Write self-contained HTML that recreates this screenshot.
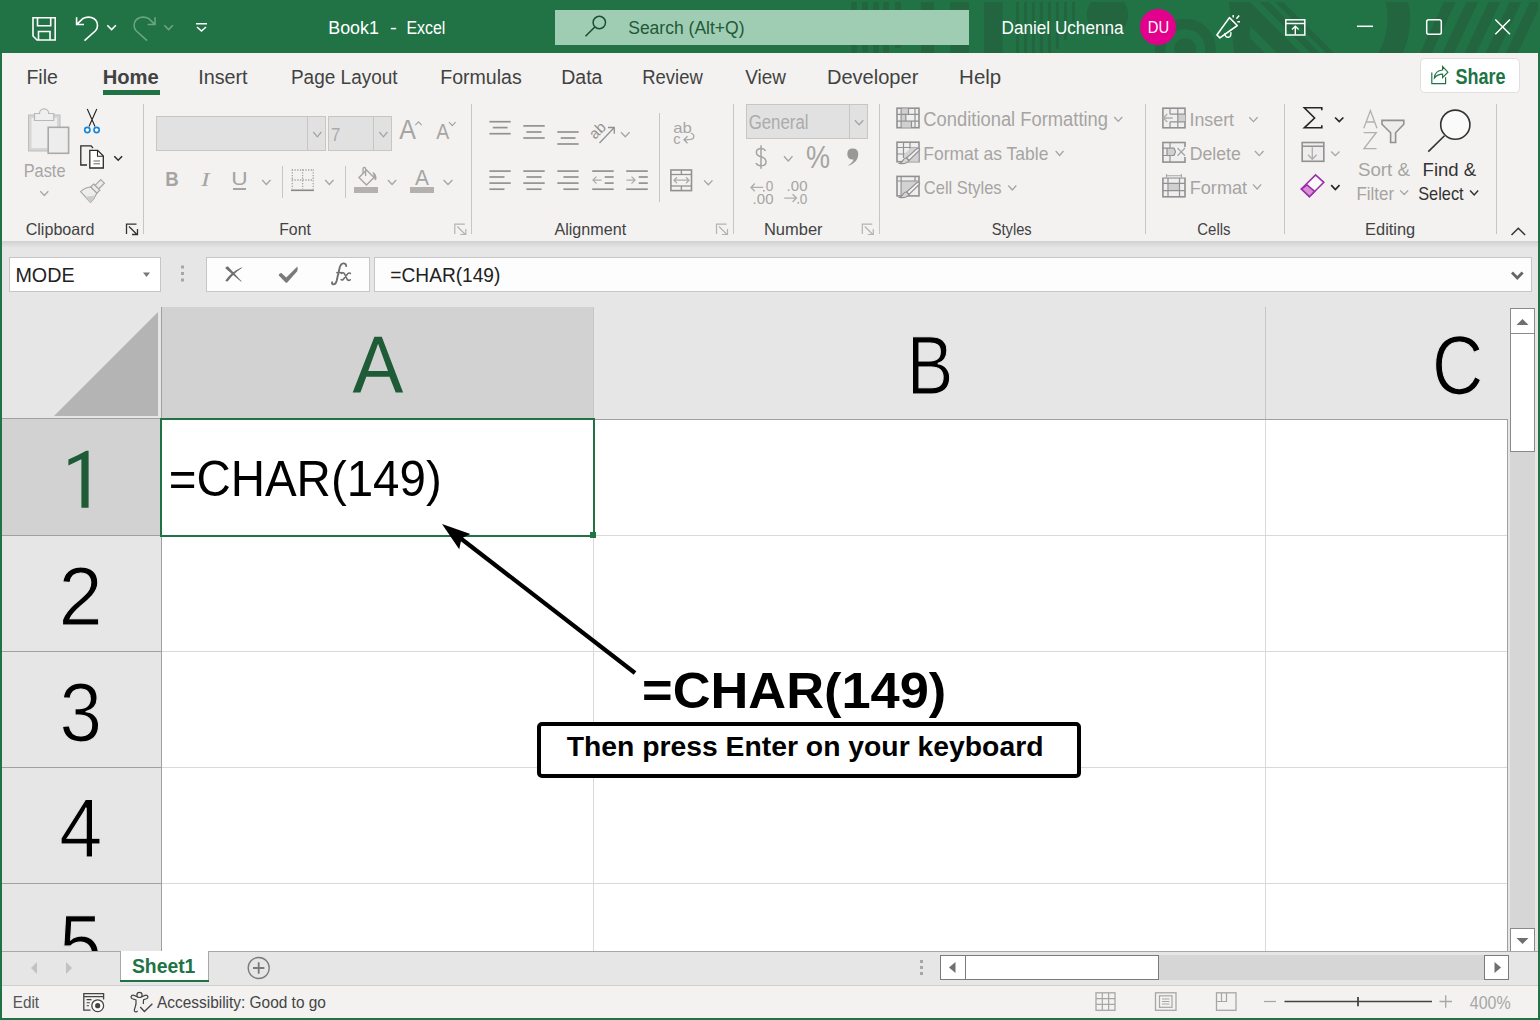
<!DOCTYPE html>
<html><head><meta charset="utf-8"><title>Book1 - Excel</title>
<style>
*{box-sizing:border-box;margin:0;padding:0}
html,body{width:1540px;height:1020px;overflow:hidden;background:#217346;font-family:"Liberation Sans",sans-serif}
.a{position:absolute}
#ov{position:absolute;left:0;top:0}
</style></head><body>

<svg id="ov" width="1540" height="1020" viewBox="0 0 1540 1020">
<rect x="0" y="0" width="1540" height="1020" rx="0" fill="#217346"/>
<rect x="2" y="53" width="1536" height="188" rx="0" fill="#f3f2f1"/>
<rect x="2" y="241" width="1536" height="710" rx="0" fill="#e6e6e6"/>
<defs><linearGradient id="shd" x1="0" y1="0" x2="0" y2="1"><stop offset="0" stop-color="#d0d0d0"/><stop offset="1" stop-color="#e6e6e6"/></linearGradient></defs>
<rect x="2" y="241" width="1536" height="7" rx="0" fill="url(#shd)"/>
<defs><clipPath id="tclip"><rect x="0" y="2" width="1538" height="51"/></clipPath></defs>
<g clip-path="url(#tclip)" fill="#22653f">
<rect x="851.3" y="2" width="5.5" height="51.0"/>
<rect x="862" y="2" width="5.9" height="50.0"/>
<rect x="873.1" y="2" width="5.7" height="51.0"/>
<rect x="883.2" y="2" width="5.8" height="51.0"/>
<rect x="895.2" y="2" width="5.8" height="46.0"/>
<rect x="920.9" y="2" width="13.0" height="51.0"/>
<rect x="950.2" y="2" width="18.7" height="51.0"/>
<rect x="984" y="2" width="18.7" height="51.0"/>
<rect x="1016.1" y="2" width="2.9" height="51.0"/>
<rect x="1024" y="2" width="2.9" height="51.0"/>
<rect x="1031.9" y="2" width="2.9" height="51.0"/>
<rect x="1039.8" y="2" width="3.2" height="51.0"/>
<rect x="1047.9" y="2" width="3.1" height="51.0"/>
<rect x="1055.8" y="2" width="3.0" height="47.0"/>
<rect x="1064" y="2" width="3.0" height="37.7"/>
<rect x="1072" y="2" width="3.0" height="20.0"/>
<circle cx="1107.5" cy="14.8" r="20.7"/>
<circle cx="1185.3" cy="49.2" r="25.2" fill="none" stroke="#22653f" stroke-width="10.4"/>
<circle cx="1185.3" cy="49.2" r="10.9"/>
<path d="M1229 2 H1283 L1334 53 H1234 Z"/>
<path d="M1250 2 H1259.5 L1310.5 53 H1301Z M1269 2 H1275 L1326 53 H1320Z M1250 26 L1277 53 H1265 L1250 38Z" fill="#217346"/>
<path d="M1385.7 2 L1408 2 Q1414 26 1403 53 L1378.7 53 Q1392 26 1385.7 2Z"/>
<path d="M1444 2 H1455.7 L1431.7 53 H1420Z"/>
<path d="M1466.4 2 H1478.1000000000001 L1454.1000000000001 53 H1442.4Z"/>
<path d="M1488.6 2 H1500.3 L1476.3 53 H1464.6Z"/>
<path d="M1509.6 2 H1521.3 L1497.3 53 H1485.6Z"/>
<path d="M1530 2 H1541.7 L1517.7 53 H1506Z"/>
</g>
<text x="328.24" y="34.00" font-family='"Liberation Sans",sans-serif' font-weight="normal" font-style="normal" font-size="18.90" textLength="50.64" lengthAdjust="spacingAndGlyphs" fill="#ffffff" >Book1</text>
<text x="390.09" y="34.00" font-family='"Liberation Sans",sans-serif' font-weight="normal" font-style="normal" font-size="18.90" textLength="6.82" lengthAdjust="spacingAndGlyphs" fill="#ffffff" >-</text>
<text x="406.39" y="34.00" font-family='"Liberation Sans",sans-serif' font-weight="normal" font-style="normal" font-size="18.90" textLength="38.97" lengthAdjust="spacingAndGlyphs" fill="#ffffff" >Excel</text>
<rect x="555" y="10" width="414" height="35" rx="0" fill="#9fcdb3"/>
<text x="628.20" y="34.00" font-family='"Liberation Sans",sans-serif' font-weight="normal" font-style="normal" font-size="18.90" textLength="116.38" lengthAdjust="spacingAndGlyphs" fill="#1f5a38" >Search (Alt+Q)</text>
<text x="1001.59" y="34.00" font-family='"Liberation Sans",sans-serif' font-weight="normal" font-style="normal" font-size="18.90" textLength="121.91" lengthAdjust="spacingAndGlyphs" fill="#ffffff" >Daniel Uchenna</text>
<circle cx="1158" cy="27" r="18" fill="#e3008c"/>
<text x="1147.79" y="33.00" font-family='"Liberation Sans",sans-serif' font-weight="normal" font-style="normal" font-size="16.72" textLength="21.35" lengthAdjust="spacingAndGlyphs" fill="#ffffff" >DU</text>
<text x="26.40" y="84.00" font-family='"Liberation Sans",sans-serif' font-weight="normal" font-style="normal" font-size="20.35" textLength="31.47" lengthAdjust="spacingAndGlyphs" fill="#424242" >File</text>
<text x="102.65" y="84.00" font-family='"Liberation Sans",sans-serif' font-weight="bold" font-style="normal" font-size="20.35" textLength="56.04" lengthAdjust="spacingAndGlyphs" fill="#424242" >Home</text>
<text x="198.17" y="84.00" font-family='"Liberation Sans",sans-serif' font-weight="normal" font-style="normal" font-size="20.35" textLength="49.47" lengthAdjust="spacingAndGlyphs" fill="#424242" >Insert</text>
<text x="290.94" y="84.00" font-family='"Liberation Sans",sans-serif' font-weight="normal" font-style="normal" font-size="20.35" textLength="106.70" lengthAdjust="spacingAndGlyphs" fill="#424242" >Page Layout</text>
<text x="440.20" y="84.00" font-family='"Liberation Sans",sans-serif' font-weight="normal" font-style="normal" font-size="20.35" textLength="81.51" lengthAdjust="spacingAndGlyphs" fill="#424242" >Formulas</text>
<text x="561.20" y="84.00" font-family='"Liberation Sans",sans-serif' font-weight="normal" font-style="normal" font-size="20.35" textLength="41.30" lengthAdjust="spacingAndGlyphs" fill="#424242" >Data</text>
<text x="642.29" y="84.00" font-family='"Liberation Sans",sans-serif' font-weight="normal" font-style="normal" font-size="20.35" textLength="60.47" lengthAdjust="spacingAndGlyphs" fill="#424242" >Review</text>
<text x="745.32" y="84.00" font-family='"Liberation Sans",sans-serif' font-weight="normal" font-style="normal" font-size="20.35" textLength="40.64" lengthAdjust="spacingAndGlyphs" fill="#424242" >View</text>
<text x="826.96" y="84.00" font-family='"Liberation Sans",sans-serif' font-weight="normal" font-style="normal" font-size="20.35" textLength="91.38" lengthAdjust="spacingAndGlyphs" fill="#424242" >Developer</text>
<text x="959.12" y="84.00" font-family='"Liberation Sans",sans-serif' font-weight="normal" font-style="normal" font-size="20.35" textLength="42.14" lengthAdjust="spacingAndGlyphs" fill="#424242" >Help</text>
<rect x="103" y="90" width="57" height="5" rx="0" fill="#217346"/>
<rect x="1420.5" y="58.5" width="99" height="34" rx="4" fill="#ffffff" stroke="#e1dfdd" stroke-width="1"/>
<text x="1455.48" y="83.50" font-family='"Liberation Sans",sans-serif' font-weight="bold" font-style="normal" font-size="21.80" textLength="50.14" lengthAdjust="spacingAndGlyphs" fill="#217346" >Share</text>
<text x="25.68" y="235.00" font-family='"Liberation Sans",sans-serif' font-weight="normal" font-style="normal" font-size="16.72" textLength="68.85" lengthAdjust="spacingAndGlyphs" fill="#424242" >Clipboard</text>
<text x="279.20" y="235.00" font-family='"Liberation Sans",sans-serif' font-weight="normal" font-style="normal" font-size="16.72" textLength="31.72" lengthAdjust="spacingAndGlyphs" fill="#424242" >Font</text>
<text x="554.47" y="235.00" font-family='"Liberation Sans",sans-serif' font-weight="normal" font-style="normal" font-size="16.72" textLength="71.65" lengthAdjust="spacingAndGlyphs" fill="#424242" >Alignment</text>
<text x="763.95" y="235.00" font-family='"Liberation Sans",sans-serif' font-weight="normal" font-style="normal" font-size="16.72" textLength="58.63" lengthAdjust="spacingAndGlyphs" fill="#424242" >Number</text>
<text x="991.73" y="235.00" font-family='"Liberation Sans",sans-serif' font-weight="normal" font-style="normal" font-size="16.72" textLength="40.00" lengthAdjust="spacingAndGlyphs" fill="#424242" >Styles</text>
<text x="1197.24" y="235.00" font-family='"Liberation Sans",sans-serif' font-weight="normal" font-style="normal" font-size="16.72" textLength="33.30" lengthAdjust="spacingAndGlyphs" fill="#424242" >Cells</text>
<text x="1365.05" y="235.00" font-family='"Liberation Sans",sans-serif' font-weight="normal" font-style="normal" font-size="16.72" textLength="50.21" lengthAdjust="spacingAndGlyphs" fill="#424242" >Editing</text>
<line x1="143.5" y1="104" x2="143.5" y2="234" stroke="#c8c6c4" stroke-width="1"/>
<line x1="471.5" y1="104" x2="471.5" y2="234" stroke="#c8c6c4" stroke-width="1"/>
<line x1="733.5" y1="104" x2="733.5" y2="234" stroke="#c8c6c4" stroke-width="1"/>
<line x1="879.5" y1="104" x2="879.5" y2="234" stroke="#c8c6c4" stroke-width="1"/>
<line x1="1145.5" y1="104" x2="1145.5" y2="234" stroke="#c8c6c4" stroke-width="1"/>
<line x1="1284.5" y1="104" x2="1284.5" y2="234" stroke="#c8c6c4" stroke-width="1"/>
<line x1="1496.5" y1="104" x2="1496.5" y2="234" stroke="#c8c6c4" stroke-width="1"/>
<rect x="9.5" y="257.5" width="151" height="34" rx="0" fill="#ffffff" stroke="#c6c6c6" stroke-width="1"/>
<text x="15.38" y="282.30" font-family='"Liberation Sans",sans-serif' font-weight="normal" font-style="normal" font-size="20.35" textLength="59.17" lengthAdjust="spacingAndGlyphs" fill="#222" >MODE</text>
<path d="M143 272.5 L150 272.5 L146.5 277Z" fill="#777"/>
<rect x="181" y="265.5" width="3" height="3" fill="#a6a6a6"/>
<rect x="181" y="272.0" width="3" height="3" fill="#a6a6a6"/>
<rect x="181" y="278.5" width="3" height="3" fill="#a6a6a6"/>
<rect x="206.5" y="257.5" width="163" height="34" rx="0" fill="#fdfdfd" stroke="#c6c6c6" stroke-width="1"/>
<rect x="374.5" y="257.5" width="1157" height="34" rx="0" fill="#fdfdfd" stroke="#c6c6c6" stroke-width="1"/>
<text x="390.37" y="282.30" font-family='"Liberation Sans",sans-serif' font-weight="normal" font-style="normal" font-size="21.08" textLength="110.02" lengthAdjust="spacingAndGlyphs" fill="#222" >=CHAR(149)</text>
<rect x="161" y="307" width="432" height="112" rx="0" fill="#d2d2d2"/>
<rect x="2" y="419" width="159" height="116" rx="0" fill="#d2d2d2"/>
<rect x="162" y="420" width="1345" height="531" rx="0" fill="#ffffff"/>
<rect x="162" y="535" width="1345" height="1" rx="0" fill="#d9d9d9"/>
<rect x="162" y="651" width="1345" height="1" rx="0" fill="#d9d9d9"/>
<rect x="162" y="767" width="1345" height="1" rx="0" fill="#d9d9d9"/>
<rect x="162" y="883" width="1345" height="1" rx="0" fill="#d9d9d9"/>
<rect x="593" y="420" width="1" height="531" rx="0" fill="#d9d9d9"/>
<rect x="1265" y="420" width="1" height="531" rx="0" fill="#d9d9d9"/>
<rect x="161" y="419" width="1346" height="1" rx="0" fill="#a0a0a0"/>
<rect x="1507" y="419" width="1" height="532" rx="0" fill="#a0a0a0"/>
<rect x="161" y="307" width="1" height="644" rx="0" fill="#a0a0a0"/>
<rect x="2" y="535" width="159" height="1" rx="0" fill="#a0a0a0"/>
<rect x="2" y="651" width="159" height="1" rx="0" fill="#a0a0a0"/>
<rect x="2" y="767" width="159" height="1" rx="0" fill="#a0a0a0"/>
<rect x="2" y="883" width="159" height="1" rx="0" fill="#a0a0a0"/>
<rect x="2" y="418" width="159" height="1" rx="0" fill="#a0a0a0"/>
<rect x="593" y="307" width="1" height="112" rx="0" fill="#c6c6c6"/>
<rect x="1265" y="307" width="1" height="112" rx="0" fill="#c6c6c6"/>
<path d="M158 312 L158 416 L54 416Z" fill="#b4b4b4"/>
<path fill-rule="evenodd" fill="#1e5b37" d="M352.7 392.6 L374.4 336.8 H381.8 L403.1 392.6 H395.7 L389.5 376.8 H366.3 L360.4 392.6 Z M368.2 371 H388 L378.1 343.8 Z"/>
<text x="906.87" y="393.50" font-family='"Liberation Sans",sans-serif' font-weight="normal" font-style="normal" font-size="82.85" textLength="46.62" lengthAdjust="spacingAndGlyphs" fill="#000" stroke="#e6e6e6" stroke-width="1.2">B</text>
<text x="1431.89" y="393.50" font-family='"Liberation Sans",sans-serif' font-weight="normal" font-style="normal" font-size="84.30" textLength="51.31" lengthAdjust="spacingAndGlyphs" fill="#000" stroke="#e6e6e6" stroke-width="1.2">C</text>
<path fill="#1e5b37" d="M81.4 507.8 V459.3 L68.4 465.6 V459.4 Q78 455.5 86.2 450.8 H88.6 V507.8 Z"/>
<text x="58.40" y="625.40" font-family='"Liberation Sans",sans-serif' font-weight="normal" font-style="normal" font-size="83.72" textLength="44.19" lengthAdjust="spacingAndGlyphs" fill="#000" stroke="#e6e6e6" stroke-width="1.2">2</text>
<text x="59.49" y="741.40" font-family='"Liberation Sans",sans-serif' font-weight="normal" font-style="normal" font-size="83.72" textLength="42.46" lengthAdjust="spacingAndGlyphs" fill="#000" stroke="#e6e6e6" stroke-width="1.2">3</text>
<text x="59.22" y="857.40" font-family='"Liberation Sans",sans-serif' font-weight="normal" font-style="normal" font-size="83.72" textLength="43.04" lengthAdjust="spacingAndGlyphs" fill="#000" stroke="#e6e6e6" stroke-width="1.2">4</text>
<text x="59.34" y="973.40" font-family='"Liberation Sans",sans-serif' font-weight="normal" font-style="normal" font-size="83.72" textLength="42.46" lengthAdjust="spacingAndGlyphs" fill="#000" stroke="#e6e6e6" stroke-width="1.2">5</text>
<text x="168.68" y="495.60" font-family='"Liberation Sans",sans-serif' font-weight="normal" font-style="normal" font-size="50.58" textLength="273.06" lengthAdjust="spacingAndGlyphs" fill="#000" >=CHAR(149)</text>
<rect x="161.0" y="419.0" width="433" height="117" rx="0" fill="none" stroke="#217346" stroke-width="2"/>
<rect x="590" y="532" width="6" height="6" rx="0" fill="#217346"/>
<rect x="588" y="531" width="2" height="4" rx="0" fill="#ffffff"/>
<rect x="589" y="530" width="4" height="2" rx="0" fill="#ffffff"/>
<line x1="635" y1="673" x2="455" y2="534" stroke="#000" stroke-width="4.2" stroke-linecap="butt"/>
<path d="M442 524 L470.4 534 L461.6 538.2 L459.2 549.2Z" fill="#000"/>
<text x="642.13" y="707.80" font-family='"Liberation Sans",sans-serif' font-weight="bold" font-style="normal" font-size="50.87" textLength="304.18" lengthAdjust="spacingAndGlyphs" fill="#000" >=CHAR(149)</text>
<rect x="539.0" y="724.0" width="540" height="52" rx="3" fill="#ffffff" stroke="#000" stroke-width="4"/>
<text x="566.68" y="756.00" font-family='"Liberation Sans",sans-serif' font-weight="bold" font-style="normal" font-size="27.62" textLength="476.78" lengthAdjust="spacingAndGlyphs" fill="#000" >Then press Enter on your keyboard</text>
<rect x="1508" y="307" width="30" height="645" rx="0" fill="#e6e6e6"/>
<rect x="1510" y="308" width="25" height="643" rx="0" fill="#d6d6d6"/>
<rect x="1510.5" y="308.5" width="24" height="25" rx="0" fill="#ffffff" stroke="#8a8a8a" stroke-width="1"/>
<path d="M1516.5 325 L1528.5 325 L1522.5 319Z" fill="#6f6f6f"/>
<rect x="1510.5" y="333.5" width="24" height="118" rx="0" fill="#ffffff" stroke="#8a8a8a" stroke-width="1"/>
<rect x="1510.5" y="928.5" width="24" height="24" rx="0" fill="#ffffff" stroke="#8a8a8a" stroke-width="1"/>
<path d="M1516.5 938 L1528.5 938 L1522.5 944Z" fill="#6f6f6f"/>
<rect x="2" y="951" width="1536" height="34" rx="0" fill="#e6e6e6"/>
<rect x="2" y="951" width="1536" height="1" rx="0" fill="#a8a8a8"/>
<path d="M37 962 L37 974 L31 968Z" fill="#c2c2c2"/>
<path d="M66 962 L66 974 L72 968Z" fill="#c2c2c2"/>
<rect x="120" y="951" width="89" height="31" rx="0" fill="#a8a8a8"/>
<rect x="121" y="951" width="87" height="29" rx="0" fill="#ffffff"/>
<rect x="120" y="980" width="89" height="2" rx="0" fill="#217346"/>
<text x="131.94" y="973.00" font-family='"Liberation Sans",sans-serif' font-weight="bold" font-style="normal" font-size="20.64" textLength="63.39" lengthAdjust="spacingAndGlyphs" fill="#217346" >Sheet1</text>
<circle cx="258.7" cy="968" r="10.5" fill="none" stroke="#7a7a7a" stroke-width="1.3"/>
<path d="M253 968 H264.4 M258.7 962.3 V973.7" stroke="#7a7a7a" stroke-width="1.8"/>
<rect x="920" y="960" width="3" height="3" rx="0" fill="#a6a6a6"/>
<rect x="920" y="966" width="3" height="3" rx="0" fill="#a6a6a6"/>
<rect x="920" y="972" width="3" height="3" rx="0" fill="#a6a6a6"/>
<rect x="940" y="955" width="220" height="25" rx="0" fill="#d6d6d6"/>
<rect x="1159" y="955" width="326" height="25" rx="0" fill="#d6d6d6"/>
<rect x="940.5" y="955.5" width="25" height="24" rx="0" fill="#ffffff" stroke="#7a7a7a" stroke-width="1"/>
<path d="M949 967.5 L955.5 962 L955.5 973Z" fill="#6f6f6f"/>
<rect x="965.5" y="955.5" width="193" height="24" rx="0" fill="#ffffff" stroke="#7a7a7a" stroke-width="1"/>
<rect x="1484.5" y="955.5" width="24" height="24" rx="0" fill="#ffffff" stroke="#7a7a7a" stroke-width="1"/>
<path d="M1501 967.5 L1494.5 962 L1494.5 973Z" fill="#6f6f6f"/>
<rect x="2" y="985" width="1536" height="1" rx="0" fill="#d0d0d0"/>
<rect x="2" y="986" width="1536" height="32" rx="0" fill="#f3f2f1"/>
<text x="12.74" y="1008.00" font-family='"Liberation Sans",sans-serif' font-weight="normal" font-style="normal" font-size="15.99" textLength="26.37" lengthAdjust="spacingAndGlyphs" fill="#555" >Edit</text>
<text x="156.97" y="1007.50" font-family='"Liberation Sans",sans-serif' font-weight="normal" font-style="normal" font-size="15.99" textLength="168.98" lengthAdjust="spacingAndGlyphs" fill="#444" >Accessibility: Good to go</text>
<text x="1469.83" y="1008.80" font-family='"Liberation Sans",sans-serif' font-weight="normal" font-style="normal" font-size="17.44" textLength="40.84" lengthAdjust="spacingAndGlyphs" fill="#a6a6a6" >400%</text>
<rect x="30" y="116.5" width="28.5" height="33" fill="#eeeeee" stroke="#d6d6d6" stroke-width="3"/>
<rect x="28.5" y="115" width="31.5" height="36" fill="none" stroke="#bdbdbd" stroke-width="1"/>
<path d="M34.5 120.5 V113.5 H39.5 A4.6 4.6 0 0 1 48.7 113.5 H53.8 V120.5Z" fill="#efefef" stroke="#b8b8b8" stroke-width="1.2"/>
<rect x="48.2" y="127.3" width="20.4" height="26" fill="#ededed" stroke="#a9a9a9" stroke-width="1.6"/>
<text x="23.66" y="176.70" font-family='"Liberation Sans",sans-serif' font-weight="normal" font-style="normal" font-size="17.88" textLength="41.87" lengthAdjust="spacingAndGlyphs" fill="#a6a6a6" >Paste</text>
<path d="M40.3 191.3 L44.3 195.5 L48.3 191.3" fill="none" stroke="#a6a6a6" stroke-width="1.3"/>
<path d="M87.3 109 L95 126.5 M96.8 109 L89 126.5" stroke="#222" stroke-width="1.1" fill="none"/>
<circle cx="87.3" cy="130" r="2.6" fill="#fff" stroke="#1a86d8" stroke-width="1.7"/>
<circle cx="96.6" cy="130" r="2.6" fill="#fff" stroke="#1a86d8" stroke-width="1.7"/>
<path d="M87 165 H80.8 V145.9 H91 L93 148" fill="none" stroke="#2b2b2b" stroke-width="1.3"/>
<path d="M89.8 168 V150.4 H97.7 L103.3 156 V168Z" fill="#fff" stroke="#2b2b2b" stroke-width="1.3"/>
<path d="M97.5 150.5 V156.2 H103.3" fill="none" stroke="#2b2b2b" stroke-width="1.1"/>
<path d="M93.5 161 H100 M93.5 163.8 H100" stroke="#555" stroke-width="0.9"/>
<path d="M114.3 156.3 L118.2 160.3 L122.1 156.3" fill="none" stroke="#2b2b2b" stroke-width="1.5"/>
<path d="M100.8 179.6 L104.4 183.2 L98.6 189 L95 185.4Z" fill="#ececec" stroke="#a6a6a6" stroke-width="1.2"/>
<path d="M93.6 184 L99.8 190.2 L96.8 193.2 L90.6 187Z" fill="#ececec" stroke="#a6a6a6" stroke-width="1.2"/>
<path d="M90.6 187 Q84.5 187.8 80.6 191.6 L90.5 202.4 Q94.5 198.5 96.8 193.2Z" fill="#ededed" stroke="#a6a6a6" stroke-width="1.2"/>
<path d="M85.5 196.8 L90.5 202.4 Q93.5 199.5 95.5 195.5Z" fill="#cdcdcd"/>
<path d="M126.5 234 V224.2 H136.5 M129 226.5 L137 234.5 M137.5 229 V234.5 H132" fill="none" stroke="#333" stroke-width="1.3"/>
<rect x="156.5" y="116.5" width="169" height="34" rx="0" fill="#e1e1e1" stroke="#c8c6c4" stroke-width="1"/>
<rect x="307" y="117" width="1" height="33" rx="0" fill="#c8c6c4"/>
<path d="M313.3 132 L317.3 136.8 L321.3 132" fill="none" stroke="#a6a4a2" stroke-width="1.3"/>
<rect x="328.5" y="116.5" width="63" height="34" rx="0" fill="#e1e1e1" stroke="#c8c6c4" stroke-width="1"/>
<rect x="373" y="117" width="1" height="33" rx="0" fill="#c8c6c4"/>
<path d="M379.4 132 L383.4 136.8 L387.4 132" fill="none" stroke="#a6a4a2" stroke-width="1.3"/>
<text x="330.93" y="141.00" font-family='"Liberation Sans",sans-serif' font-weight="normal" font-style="normal" font-size="19.04" textLength="9.42" lengthAdjust="spacingAndGlyphs" fill="#ababab" >7</text>
<text x="399.35" y="139.30" font-family='"Liberation Sans",sans-serif' font-weight="normal" font-style="normal" font-size="27.18" textLength="16.70" lengthAdjust="spacingAndGlyphs" fill="#a6a4a2" >A</text>
<path d="M415.3 125.2 L418.5 121.8 L421.7 125.2" fill="none" stroke="#a6a4a2" stroke-width="1.2"/>
<text x="436.26" y="139.30" font-family='"Liberation Sans",sans-serif' font-weight="normal" font-style="normal" font-size="21.22" textLength="12.98" lengthAdjust="spacingAndGlyphs" fill="#a6a4a2" >A</text>
<path d="M449 122.2 L452.3 125.6 L455.6 122.2" fill="none" stroke="#a6a4a2" stroke-width="1.2"/>
<text x="165.35" y="186.00" font-family='"Liberation Sans",sans-serif' font-weight="bold" font-style="normal" font-size="19.62" textLength="13.50" lengthAdjust="spacingAndGlyphs" fill="#a6a4a2" >B</text>
<text x="201.00" y="186.00" font-family='"Liberation Serif",serif' font-weight="normal" font-style="italic" font-size="19.62" textLength="8.68" lengthAdjust="spacingAndGlyphs" fill="#a6a4a2" >I</text>
<text x="231.35" y="185.00" font-family='"Liberation Sans",sans-serif' font-weight="normal" font-style="normal" font-size="18.17" textLength="16.41" lengthAdjust="spacingAndGlyphs" fill="#a6a4a2" >U</text>
<rect x="233" y="188" width="13" height="2" rx="0" fill="#a6a4a2"/>
<path d="M262.2 180 L266.35 184.5 L270.5 180" fill="none" stroke="#a6a4a2" stroke-width="1.3"/>
<rect x="282" y="166" width="1" height="32" rx="0" fill="#c8c6c4"/>
<path d="M291.8 170 H313.5 M291.8 180 H313.5" stroke="#a6a4a2" stroke-width="1.3" stroke-dasharray="1.3 1.4"/>
<path d="M292.3 169.5 V189 M313.2 169.5 V189 M302.6 169.5 V189" stroke="#a6a4a2" stroke-width="1.3" stroke-dasharray="1.3 1.4"/>
<rect x="291" y="189.5" width="23" height="1.6" rx="0" fill="#8a8886"/>
<path d="M325.2 180 L329.35 184.5 L333.5 180" fill="none" stroke="#a6a4a2" stroke-width="1.3"/>
<rect x="345" y="166" width="1" height="32" rx="0" fill="#c8c6c4"/>
<path d="M359 177.5 L366.5 170 L374 177.5 L366.5 185Z" fill="none" stroke="#a6a4a2" stroke-width="1.4"/>
<path d="M363 173.5 V168.8 Q363 167.5 364.3 167.5 Q365.6 167.5 365.6 168.8 V176" fill="none" stroke="#a6a4a2" stroke-width="1.3"/>
<path d="M372.5 172 Q376.5 173 376.5 178.5 Q376 181 374.8 180 Z" fill="#a6a4a2"/>
<rect x="354" y="187" width="24" height="6" rx="0" fill="#b3b0ad"/>
<path d="M387.9 180 L392.04999999999995 184.5 L396.2 180" fill="none" stroke="#a6a4a2" stroke-width="1.3"/>
<text x="414.96" y="185.00" font-family='"Liberation Sans",sans-serif' font-weight="normal" font-style="normal" font-size="22.67" textLength="13.98" lengthAdjust="spacingAndGlyphs" fill="#a6a4a2" >A</text>
<rect x="410" y="187" width="24" height="6" rx="0" fill="#b3b0ad"/>
<path d="M443.6 180 L448.0 184.5 L452.4 180" fill="none" stroke="#a6a4a2" stroke-width="1.3"/>
<path d="M454.8 234 V224.2 H464.8 M457.3 226.5 L465.3 234.5 M465.8 229 V234.5 H460.3" fill="none" stroke="#b5b3b1" stroke-width="1.2"/>
<path d="M489.4 121.7 H510.7" stroke="#939190" stroke-width="1.7"/>
<path d="M492.8 127.6 H507.6" stroke="#939190" stroke-width="1.7"/>
<path d="M489.4 133.7 H510.7" stroke="#939190" stroke-width="1.7"/>
<path d="M523.3 125.9 H544.7" stroke="#939190" stroke-width="1.7"/>
<path d="M526.4 132 H541.6" stroke="#939190" stroke-width="1.7"/>
<path d="M523.3 138 H544.7" stroke="#939190" stroke-width="1.7"/>
<path d="M557.3 132 H578.6" stroke="#939190" stroke-width="1.7"/>
<path d="M560.7 138 H575.5" stroke="#939190" stroke-width="1.7"/>
<path d="M557.3 144 H578.6" stroke="#939190" stroke-width="1.7"/>
<text x="0" y="0" font-family='"Liberation Sans",sans-serif' font-size="15" fill="#939190" transform="translate(595,140) rotate(-45)">ab</text>
<path d="M599.5 143 L614.3 127.5 M608 127.5 H614.3 V133.8" fill="none" stroke="#939190" stroke-width="1.3"/>
<path d="M621 132.3 L625.3 136.8 L629.6 132.3" fill="none" stroke="#a6a4a2" stroke-width="1.3"/>
<path d="M489.4 171.1 H510.7" stroke="#939190" stroke-width="1.7"/>
<path d="M489.4 177 H504.5" stroke="#939190" stroke-width="1.7"/>
<path d="M489.4 183.1 H510.7" stroke="#939190" stroke-width="1.7"/>
<path d="M489.4 189.2 H504.5" stroke="#939190" stroke-width="1.7"/>
<path d="M523.3 171.1 H544.7" stroke="#939190" stroke-width="1.7"/>
<path d="M526.4 177 H541.6" stroke="#939190" stroke-width="1.7"/>
<path d="M523.3 183.1 H544.7" stroke="#939190" stroke-width="1.7"/>
<path d="M526.4 189.2 H541.6" stroke="#939190" stroke-width="1.7"/>
<path d="M557.3 171.1 H578.6" stroke="#939190" stroke-width="1.7"/>
<path d="M563.4 177 H578.6" stroke="#939190" stroke-width="1.7"/>
<path d="M557.3 183.1 H578.6" stroke="#939190" stroke-width="1.7"/>
<path d="M563.4 189.2 H578.6" stroke="#939190" stroke-width="1.7"/>
<path d="M592.2 171.1 H613.7" stroke="#939190" stroke-width="1.7"/>
<path d="M604.7 177 H613.7" stroke="#939190" stroke-width="1.7"/>
<path d="M604.7 183.1 H613.7" stroke="#939190" stroke-width="1.7"/>
<path d="M592.2 189.2 H613.7" stroke="#939190" stroke-width="1.7"/>
<path d="M601.6 180.1 H593 M596.5 176.6 L593 180.1 L596.5 183.6" fill="none" stroke="#adabaa" stroke-width="1.3"/>
<path d="M626.2 171.1 H647.8" stroke="#939190" stroke-width="1.7"/>
<path d="M638.7 177 H647.8" stroke="#939190" stroke-width="1.7"/>
<path d="M638.7 183.1 H647.8" stroke="#939190" stroke-width="1.7"/>
<path d="M626.2 189.2 H647.8" stroke="#939190" stroke-width="1.7"/>
<path d="M626.5 180.1 H635 M631.5 176.6 L635 180.1 L631.5 183.6" fill="none" stroke="#adabaa" stroke-width="1.3"/>
<rect x="659" y="113" width="1" height="89" rx="0" fill="#c8c6c4"/>
<text x="673.29" y="132.60" font-family='"Liberation Sans",sans-serif' font-weight="normal" font-style="normal" font-size="14.50" textLength="18.61" lengthAdjust="spacingAndGlyphs" fill="#a6a6a6" >ab</text>
<text x="673.38" y="143.50" font-family='"Liberation Sans",sans-serif' font-weight="normal" font-style="normal" font-size="14.50" textLength="7.31" lengthAdjust="spacingAndGlyphs" fill="#a6a6a6" >c</text>
<path d="M691 133 Q695.5 135 693 138.5 Q691 140 684 139.8 M687.5 136.3 L684 139.8 L687.5 143.3" fill="none" stroke="#a6a6a6" stroke-width="1.3"/>
<rect x="670.9" y="170" width="20.6" height="20.6" fill="none" stroke="#939190" stroke-width="1.6"/>
<path d="M671 174.5 H691.5" stroke="#939190" stroke-width="1.3"/>
<path d="M671 186 H691.5" stroke="#939190" stroke-width="1.3"/>
<path d="M681.4 170 V174.5 M681.4 186 V190.6" stroke="#939190" stroke-width="1.3"/>
<path d="M674 180.2 H689 M677 177.2 L674 180.2 L677 183.2 M686 177.2 L689 180.2 L686 183.2" fill="none" stroke="#adabaa" stroke-width="1.3"/>
<path d="M704.1 180.4 L708.3 184.8 L712.5 180.4" fill="none" stroke="#a6a4a2" stroke-width="1.3"/>
<path d="M716.5 234 V224.2 H726.5 M719 226.5 L727 234.5 M727.5 229 V234.5 H722" fill="none" stroke="#b5b3b1" stroke-width="1.2"/>
<rect x="746.5" y="104.5" width="121" height="34" rx="0" fill="#e1e1e1" stroke="#c8c6c4" stroke-width="1"/>
<rect x="849" y="105" width="1" height="33" rx="0" fill="#c8c6c4"/>
<path d="M854.9 120.3 L859.0999999999999 124.8 L863.3 120.3" fill="none" stroke="#a6a4a2" stroke-width="1.3"/>
<text x="748.65" y="128.90" font-family='"Liberation Sans",sans-serif' font-weight="normal" font-style="normal" font-size="19.33" textLength="59.87" lengthAdjust="spacingAndGlyphs" fill="#ababab" >General</text>
<path d="M761 145.3 V168.7 M765.6 151 Q764.3 148.5 761 148.5 Q756.4 148.5 756.4 152.4 Q756.4 155.4 761 156.7 Q766 158 766 162 Q766 165.8 761 165.8 Q757.4 165.8 756 163" fill="none" stroke="#a6a4a2" stroke-width="1.5"/>
<path d="M784 156.3 L788.25 161 L792.5 156.3" fill="none" stroke="#a6a4a2" stroke-width="1.3"/>
<text x="805.94" y="167.70" font-family='"Liberation Sans",sans-serif' font-weight="normal" font-style="normal" font-size="30.96" textLength="24.03" lengthAdjust="spacingAndGlyphs" fill="#a6a4a2" >%</text>
<path d="M852.8 148.6 Q858.3 148.6 858.3 154.5 Q858.3 162.5 847.5 166.3 Q853.5 161.5 853.5 159.5 Q847.3 159.8 847.3 154 Q847.3 148.6 852.8 148.6Z" fill="#9a9896"/>
<path d="M763.2 187.4 H751 M754.8 183.6 L751 187.4 L754.8 191.2" fill="none" stroke="#b0aeac" stroke-width="1.4"/>
<text x="765.87" y="191.10" font-family='"Liberation Sans",sans-serif' font-weight="normal" font-style="normal" font-size="14.10" textLength="7.56" lengthAdjust="spacingAndGlyphs" fill="#a6a4a2" >0</text>
<rect x="763" y="190" width="1.6" height="1.6" rx="0" fill="#a6a4a2"/>
<text x="752.63" y="203.50" font-family='"Liberation Sans",sans-serif' font-weight="normal" font-style="normal" font-size="14.10" textLength="20.86" lengthAdjust="spacingAndGlyphs" fill="#a6a4a2" >.00</text>
<text x="786.63" y="191.10" font-family='"Liberation Sans",sans-serif' font-weight="normal" font-style="normal" font-size="14.10" textLength="20.86" lengthAdjust="spacingAndGlyphs" fill="#a6a4a2" >.00</text>
<path d="M784.2 198.1 H796.4 M792.6 194.3 L796.4 198.1 L792.6 201.9" fill="none" stroke="#b0aeac" stroke-width="1.4"/>
<text x="799.87" y="203.50" font-family='"Liberation Sans",sans-serif' font-weight="normal" font-style="normal" font-size="14.10" textLength="7.56" lengthAdjust="spacingAndGlyphs" fill="#a6a4a2" >0</text>
<rect x="797.5" y="202" width="1.6" height="1.6" rx="0" fill="#a6a4a2"/>
<path d="M862.3 234 V224.2 H872.3 M864.8 226.5 L872.8 234.5 M873.3 229 V234.5 H867.8" fill="none" stroke="#b5b3b1" stroke-width="1.2"/>
<rect x="897.0" y="108.2" width="22" height="19.5" fill="#efefef" stroke="#929090" stroke-width="1.6"/>
<rect x="901.5" y="108.5" width="7" height="5.9" fill="#d0d0d0"/>
<rect x="901.5" y="115" width="4.2" height="6" fill="#d0d0d0"/>
<rect x="901.5" y="121.8" width="10" height="5.8" fill="#d0d0d0"/>
<path d="M897 114.4 H919 M897 121.1 H919 M901.1 108 V128 M908.5 108 V114.4 M905.8 114.4 V121.1 M911.5 121.1 V128 M915 108 V128" stroke="#929090" stroke-width="1.2" fill="none"/>
<text x="923.37" y="125.90" font-family='"Liberation Sans",sans-serif' font-weight="normal" font-style="normal" font-size="19.33" textLength="184.61" lengthAdjust="spacingAndGlyphs" fill="#a6a4a2" >Conditional Formatting</text>
<path d="M1114.2 117 L1118.25 121.4 L1122.3 117" fill="none" stroke="#a6a4a2" stroke-width="1.3"/>
<rect x="897.0" y="142.20000000000002" width="22" height="19.5" fill="#efefef" stroke="#929090" stroke-width="1.6"/>
<path d="M897 147.5 H919 M897 154 H912 M903.5 142 V158 M910 142 V150" stroke="#929090" stroke-width="1.2" fill="none"/>
<path d="M904 154.5 L911 147.5 L918.5 147.5 L918.5 161.8 L904 161.8Z" fill="#d2d2d2"/>
<path d="M918.5 148.5 Q920.0 148.5 919.5 150.2 L909.0 160.5 L906.5 158 L916.7 148.8Z" fill="#f3f2f1" stroke="#929090" stroke-width="1.2"/>
<path d="M906.5 158 L909.0 160.5 Q906.5 164.5 899.5 163.5 Q902.5 162 903.5 159.5 Q904.5 158 906.5 158Z" fill="#d6d6d6" stroke="#929090" stroke-width="1.2"/>
<text x="923.29" y="159.70" font-family='"Liberation Sans",sans-serif' font-weight="normal" font-style="normal" font-size="18.31" textLength="125.17" lengthAdjust="spacingAndGlyphs" fill="#a6a4a2" >Format as Table</text>
<path d="M1055.7 151 L1059.6 155.4 L1063.5 151" fill="none" stroke="#a6a4a2" stroke-width="1.3"/>
<rect x="897.0" y="176.4" width="22" height="19.5" fill="#efefef" stroke="#929090" stroke-width="1.6"/>
<path d="M901.5 181 H918.5 L905 194 H901.5Z" fill="#d2d2d2"/>
<path d="M897 181 H919 M901.1 176 V196 M915 176 V181" stroke="#929090" stroke-width="1.2" fill="none"/>
<path d="M918.5 182.5 Q920.0 182.5 919.5 184.2 L909.0 194.5 L906.5 192 L916.7 182.8Z" fill="#f3f2f1" stroke="#929090" stroke-width="1.2"/>
<path d="M906.5 192 L909.0 194.5 Q906.5 198.5 899.5 197.5 Q902.5 196 903.5 193.5 Q904.5 192 906.5 192Z" fill="#d6d6d6" stroke="#929090" stroke-width="1.2"/>
<text x="923.86" y="193.90" font-family='"Liberation Sans",sans-serif' font-weight="normal" font-style="normal" font-size="19.04" textLength="77.73" lengthAdjust="spacingAndGlyphs" fill="#a6a4a2" >Cell Styles</text>
<path d="M1008.3 185.5 L1012.3 190 L1016.3 185.5" fill="none" stroke="#a6a4a2" stroke-width="1.3"/>
<rect x="1162.8999999999999" y="108.2" width="22.1" height="19.6" fill="#efefef" stroke="#929090" stroke-width="1.6"/>
<rect x="1178" y="114.6" width="7" height="7" fill="#d0d0d0"/>
<path d="M1170 114.2 H1185 M1170 121.8 H1185 M1170 108 V114.2 M1170 121.8 V128 M1177.8 108 V128" stroke="#929090" stroke-width="1.2" fill="none"/>
<path d="M1172.8 118 H1163.3 M1167.3 114 L1163.3 118 L1167.3 122" fill="none" stroke="#b0aeac" stroke-width="1.3"/>
<text x="1189.56" y="125.70" font-family='"Liberation Sans",sans-serif' font-weight="normal" font-style="normal" font-size="18.17" textLength="44.47" lengthAdjust="spacingAndGlyphs" fill="#a6a4a2" >Insert</text>
<path d="M1249.3 117.3 L1253.4499999999998 121.6 L1257.6 117.3" fill="none" stroke="#a6a4a2" stroke-width="1.3"/>
<rect x="1162.8999999999999" y="142.5" width="22.1" height="19.6" fill="#efefef" stroke="#929090" stroke-width="1.6"/>
<rect x="1167" y="148.4" width="7.5" height="6.9" fill="#d0d0d0"/>
<path d="M1162.5 148.2 H1174 L1175.5 151.8 L1174 155.5 H1162.5 M1170 142 V148.2 M1170 155.5 V162 M1167 148.2 V155.5" stroke="#929090" stroke-width="1.2" fill="none"/>
<rect x="1176" y="147" width="10" height="10" fill="#f3f2f1"/>
<path d="M1177.5 148 L1185 155.8 M1185 148 L1177.5 155.8" stroke="#a6a6a6" stroke-width="1.3"/>
<text x="1189.75" y="159.70" font-family='"Liberation Sans",sans-serif' font-weight="normal" font-style="normal" font-size="18.75" textLength="51.03" lengthAdjust="spacingAndGlyphs" fill="#a6a4a2" >Delete</text>
<path d="M1255 151 L1259.25 155.6 L1263.5 151" fill="none" stroke="#a6a4a2" stroke-width="1.3"/>
<rect x="1162.9" y="177.8" width="22.1" height="19" fill="#efefef" stroke="#929090" stroke-width="1.6"/>
<rect x="1168.5" y="183.5" width="10.5" height="7" fill="#d0d0d0"/>
<path d="M1163 183.3 H1185 M1163 190.7 H1185 M1168 178 V197 M1179.5 178 V197" stroke="#929090" stroke-width="1.2" fill="none"/>
<rect x="1160" y="174" width="28" height="3.5" rx="0" fill="#f3f2f1"/>
<path d="M1166.5 175.8 H1181.4 M1166.5 174 V177.5 M1181.4 174 V177.5" stroke="#a6a6a6" stroke-width="1.1"/>
<text x="1189.71" y="193.70" font-family='"Liberation Sans",sans-serif' font-weight="normal" font-style="normal" font-size="18.31" textLength="57.42" lengthAdjust="spacingAndGlyphs" fill="#a6a4a2" >Format</text>
<path d="M1253 184.4 L1257.1 189 L1261.2 184.4" fill="none" stroke="#a6a4a2" stroke-width="1.3"/>
<path d="M1321.8 110.3 V107.7 H1304.3 L1314.6 118 L1304.3 127.8 H1321.8 V125.2" fill="none" stroke="#262626" stroke-width="1.6" stroke-linejoin="miter"/>
<path d="M1335.1 117.5 L1339.25 121.6 L1343.4 117.5" fill="none" stroke="#262626" stroke-width="1.7"/>
<rect x="1302.2" y="142.5" width="21.6" height="18.8" fill="#ededed" stroke="#929090" stroke-width="1.6"/>
<rect x="1302" y="145.5" width="22" height="1.5" rx="0" fill="#929090"/>
<path d="M1312.3 147.3 V159 M1308 154.8 L1312.3 159.2 L1316.6 154.8" fill="none" stroke="#b0aeac" stroke-width="1.3"/>
<path d="M1331.2 151.5 L1335.35 155.6 L1339.5 151.5" fill="none" stroke="#a6a4a2" stroke-width="1.3"/>
<path d="M1301.4 189 L1309.4 196.7 L1323.8 182.3 L1315.6 174.9Z" fill="#fafafa" stroke="#9b30a9" stroke-width="1.6"/>
<path d="M1301.4 189 L1309.4 196.7 L1314.6 191.4 L1307.1 184.9Z" fill="#d98fd8" stroke="#9b30a9" stroke-width="1.6"/>
<path d="M1331.2 185.2 L1335.35 189.5 L1339.5 185.2" fill="none" stroke="#262626" stroke-width="1.7"/>
<path d="M1363.8 128.3 L1370.4 110.5 L1377 128.3 M1366 122 H1374.8" fill="none" stroke="#b0b0b0" stroke-width="1.3"/>
<path d="M1363.6 132.6 H1376.2 L1364 148.6 H1376.5" fill="none" stroke="#b0b0b0" stroke-width="1.4"/>
<path d="M1382 120.4 H1403.8 V124.2 L1395.6 132.8 V142.5 H1390.6 V132.8 L1382 124.2Z" fill="#ededed" stroke="#929090" stroke-width="1.6"/>
<text x="1357.95" y="176.00" font-family='"Liberation Sans",sans-serif' font-weight="normal" font-style="normal" font-size="18.46" textLength="52.04" lengthAdjust="spacingAndGlyphs" fill="#a6a4a2" >Sort &amp;</text>
<text x="1356.41" y="199.60" font-family='"Liberation Sans",sans-serif' font-weight="normal" font-style="normal" font-size="19.19" textLength="37.67" lengthAdjust="spacingAndGlyphs" fill="#a6a4a2" >Filter</text>
<path d="M1400.2 190.4 L1404.2 194.5 L1408.2 190.4" fill="none" stroke="#a6a4a2" stroke-width="1.3"/>
<circle cx="1455.3" cy="124.7" r="14.6" fill="#fafafa" stroke="#333" stroke-width="1.6"/>
<path d="M1444.5 135.8 L1428.3 151.6" stroke="#333" stroke-width="1.6"/>
<text x="1422.58" y="175.80" font-family='"Liberation Sans",sans-serif' font-weight="normal" font-style="normal" font-size="18.46" textLength="53.61" lengthAdjust="spacingAndGlyphs" fill="#333" >Find &amp;</text>
<text x="1418.16" y="199.90" font-family='"Liberation Sans",sans-serif' font-weight="normal" font-style="normal" font-size="18.46" textLength="45.46" lengthAdjust="spacingAndGlyphs" fill="#333" >Select</text>
<path d="M1470.1 190.6 L1474.15 195 L1478.2 190.6" fill="none" stroke="#333" stroke-width="1.5"/>
<path d="M1511.5 235 L1518.3 228.2 L1525.1 235" fill="none" stroke="#333" stroke-width="1.5"/>
<path d="M33 17.8 H55.2 V40 H37 L33 36Z M37.5 17.8 V25.8 H50.7 V17.8 M38.5 40 V31.5 H50 V40" fill="none" stroke="#fff" stroke-width="1.6" stroke-linejoin="miter"/>
<path d="M76.6 17.2 V24.5 H84 M76.8 24.3 L83 18.5 Q87 16.3 91.5 17.5 Q97.5 19.5 97.5 25.5 Q97.5 28.5 95.5 30.8 L84.5 40.7" fill="none" stroke="#fff" stroke-width="1.6"/>
<path d="M107.3 25.2 L111.6 29.5 L115.9 25.2" fill="none" stroke="#fff" stroke-width="1.6"/>
<path d="M155 17.2 V24.5 H147.6 M154.8 24.3 L148.6 18.5 Q144.6 16.3 140.1 17.5 Q134.1 19.5 134.1 25.5 Q134.1 28.5 136.1 30.8 L147.1 40.7" fill="none" stroke="#6aa583" stroke-width="1.6"/>
<path d="M164.3 25.2 L168.6 29.5 L172.9 25.2" fill="none" stroke="#6aa583" stroke-width="1.6"/>
<path d="M196 23.7 H207 M197 27 L201.5 31 L206 27" fill="none" stroke="#fff" stroke-width="1.6"/>
<circle cx="599.3" cy="22.5" r="6.2" fill="none" stroke="#1c4e31" stroke-width="1.5"/>
<path d="M594.8 27 L585.5 36.3" stroke="#1c4e31" stroke-width="1.6"/>
<path d="M1229.4 17.6 L1237.3 25.5 L1219.9 37.8 L1216.9 35Z" fill="none" stroke="#fff" stroke-width="1.6" stroke-linejoin="round"/>
<path d="M1224.6 33.2 Q1225 37.5 1228.5 37.3 Q1231.5 36.8 1230.8 32.2" fill="none" stroke="#fff" stroke-width="1.4"/>
<path d="M1233.2 15 V17.6 M1236.4 18.8 L1239.2 15.6 M1237.3 21.8 H1240" stroke="#fff" stroke-width="1.5"/>
<rect x="1285.8" y="19.8" width="19" height="15.2" fill="none" stroke="#fff" stroke-width="1.5"/>
<path d="M1286 23.5 H1305 M1295.3 34.5 V26.5 M1292 29.5 L1295.3 26.3 L1298.6 29.5" fill="none" stroke="#fff" stroke-width="1.4"/>
<path d="M1357 26.3 H1373" stroke="#fff" stroke-width="1.5"/>
<rect x="1426.7" y="19.7" width="14.6" height="14.6" rx="2" fill="none" stroke="#fff" stroke-width="1.5"/>
<path d="M1495.3 19.5 L1510 34.2 M1510 19.5 L1495.3 34.2" stroke="#fff" stroke-width="1.5"/>
<path d="M1431.8 72.6 V83.6 H1445.6 V77.2" fill="none" stroke="#217346" stroke-width="1.2"/>
<path d="M1434.4 78 Q1435 70.5 1442.6 70 V66.6 L1447.9 72.2 L1442.6 77.6 V74.2 Q1437.5 74.2 1434.4 78Z" fill="none" stroke="#217346" stroke-width="1.2" stroke-linejoin="miter"/>
<path d="M225.3 268.3 Q226 266 228 266.6 L241.8 281.4 Q241.2 281.8 240.5 281.2Z" fill="#6f6f6f"/>
<path d="M241.8 267.2 Q242.3 267.7 241.6 268.3 Q233.5 273.5 228 281 Q226.5 282 225.4 280.4 Q231 272 241.8 267.2Z" fill="#6f6f6f"/>
<path d="M278.6 275.2 Q279.5 273 281.3 273 L286.3 277.5 L297.4 266.6 Q298 269 297.2 271.2 L287.2 282.6 Q286.4 283.2 285.6 282.4Z" fill="#7a7a7a"/>
<path d="M346.2 266 Q346 263.2 343.3 263.4 Q340.6 263.8 339.6 268 L336.6 281 Q335.6 284.8 333 284.3 Q331.6 284 332.2 282.3" fill="none" stroke="#6f6f6f" stroke-width="1.9" stroke-linecap="round"/>
<path d="M336.2 272.6 H342.6" stroke="#6f6f6f" stroke-width="1.4"/>
<path d="M341.4 273.3 Q343.4 271.8 344.6 274 L347 279 Q348.2 281.2 350.3 279.8 M350.4 273.4 Q349 272.3 347.5 274 L343.4 279.2 Q342.4 280.6 341.2 279.6" fill="none" stroke="#6f6f6f" stroke-width="1.6" stroke-linecap="round"/>
<path d="M1512 272.5 L1517.3 278 L1522.6 272.5" fill="none" stroke="#666" stroke-width="2.8"/>
<path d="M90.5 1010.2 H83.8 V993.6 H103.6 V999.5 M83.8 996.6 H103.6" fill="none" stroke="#444" stroke-width="1.3"/>
<path d="M86.6 999.6 H91.5 M86.6 1002.7 H89.8 M86.6 1005.7 H89" stroke="#444" stroke-width="1.1"/>
<circle cx="97.7" cy="1005.7" r="5.9" fill="#fff" stroke="#444" stroke-width="1.3"/>
<circle cx="97.7" cy="1005.7" r="2.6" fill="#444"/>
<circle cx="139.5" cy="994.9" r="2.6" fill="none" stroke="#444" stroke-width="1.2"/>
<path d="M137 996.8 Q133.5 994.5 131.8 995.5 Q130 997.5 132.5 998.8 L136 1000 Q136.3 1004 135.5 1006 L134.4 1009.6 Q134 1012 136.2 1011.8 Q137 1011.6 137.6 1011 M142 996.8 Q145.5 994.5 147.2 995.5 Q149 997.5 146.5 998.8 L143.6 999.8 Q143.2 1002 143.4 1004" fill="none" stroke="#444" stroke-width="1.2"/>
<path d="M140.2 1007 L144.4 1011.5 L152.4 1003.7" fill="none" stroke="#444" stroke-width="1.3"/>
<rect x="1096" y="992.8" width="19" height="17.5" fill="none" stroke="#a6a6a6" stroke-width="1.3"/>
<path d="M1096 998.6 H1115 M1096 1004.4 H1115 M1102.3 993 V1010 M1108.6 993 V1010" stroke="#a6a6a6" stroke-width="1.2"/>
<rect x="1155.5" y="992.8" width="20.5" height="17.5" fill="none" stroke="#a6a6a6" stroke-width="1.3"/>
<rect x="1159.5" y="995.8" width="12.5" height="11.5" fill="none" stroke="#a6a6a6" stroke-width="1.2"/>
<path d="M1162 999 H1169.5 M1162 1001.5 H1169.5 M1162 1004 H1169.5" stroke="#a6a6a6" stroke-width="1"/>
<rect x="1216.5" y="992.8" width="19.5" height="17.5" fill="none" stroke="#a6a6a6" stroke-width="1.3"/>
<path d="M1216.5 1001.5 H1226.5 V993 M1221.5 993 V1001.5" fill="none" stroke="#a6a6a6" stroke-width="1.2"/>
<path d="M1264 1001.5 H1276" stroke="#a6a6a6" stroke-width="1.3"/>
<path d="M1284.5 1001.5 H1432" stroke="#444" stroke-width="1.6"/>
<path d="M1358 997 V1006.3" stroke="#444" stroke-width="1.8"/>
<path d="M1439.5 1001.5 H1452 M1445.7 995.3 V1007.7" stroke="#a6a6a6" stroke-width="1.3"/>
</svg>
</body></html>
